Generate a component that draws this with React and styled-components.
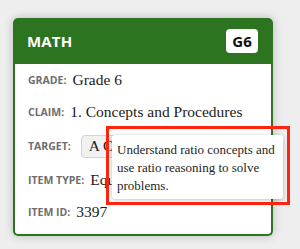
import React from 'react'
import styled, { createGlobalStyle } from 'styled-components'

const Global = createGlobalStyle`
  html, body {
    margin: 0;
    padding: 0;
    background: #eeeeee;
  }
  #root {
    width: 300px;
    height: 249px;
    overflow: hidden;
  }
`

const Stage = styled.div`
  position: relative;
  width: 300px;
  height: 249px;
  padding: 18px 0 0 13px;
  box-sizing: border-box;
`

const Card = styled.div`
  width: 260px;
  border-radius: 5px;
  box-shadow: 0 0 10px rgba(0, 0, 0, 0.22);
  background: #fff;
`

const Head = styled.div`
  height: 46px;
  display: flex;
  align-items: center;
  justify-content: space-between;
  padding: 0 15px 0 14px;
  background: #2c7420;
  border-radius: 5px 5px 0 0;
`

const Subject = styled.span`
  color: #fff;
  font-family: 'Open Sans', sans-serif;
  font-weight: 700;
  font-size: 15px;
  letter-spacing: 0.01em;
`

const Badge = styled.span`
  width: 32px;
  height: 24px;
  display: flex;
  align-items: center;
  justify-content: center;
  background: #fff;
  border-radius: 4px;
  color: #111;
  font-family: 'Open Sans', sans-serif;
  font-weight: 700;
  font-size: 15px;
`

const Body = styled.div`
  border: 2px solid #2c7420;
  border-top: none;
  border-radius: 0 0 5px 5px;
  padding: 0 0 6px 13px;
`

const Row = styled.div`
  height: ${(p) => (p.tall ? 36 : 32)}px;
  display: flex;
  align-items: center;
  gap: 6px;
  white-space: nowrap;
  overflow: hidden;
`

const Label = styled.span`
  font-family: 'Open Sans', sans-serif;
  font-weight: 700;
  font-size: 10.5px;
  color: #6e6e6e;
  text-transform: uppercase;
`

const Value = styled.span`
  font-family: 'Liberation Serif', serif;
  font-size: 15.5px;
  color: #1a1a1a;
`

const Pill = styled.span`
  height: 23px;
  box-sizing: border-box;
  display: flex;
  align-items: center;
  padding: 0 7px;
  margin-left: 4px;
  width: 170px;
  overflow: hidden;
  background: #f1f1f1;
  border: 1px solid #d2d2d2;
  border-radius: 4px;
  font-family: 'Liberation Serif', serif;
  font-size: 15.5px;
  color: #1a1a1a;
`

const Highlight = styled.div`
  position: absolute;
  left: 106px;
  top: 126px;
  width: 184px;
  height: 79px;
  box-sizing: border-box;
  border: 3px solid #ff2410;
`

const Tip = styled.div`
  position: absolute;
  left: 112px;
  top: 135px;
  width: 171px;
  height: 64px;
  box-sizing: border-box;
  padding: 6px 4px 6px 5px;
  background: #fff;
  border-radius: 3px;
  box-shadow: 0 1px 4px rgba(0, 0, 0, 0.25);
  font-family: 'Liberation Serif', serif;
  font-size: 13px;
  line-height: 18px;
  color: #1e1e1e;
`

const rows = [
  { label: 'Grade:', value: 'Grade 6' },
  { label: 'Claim:', value: '1. Concepts and Procedures' },
  { label: 'Target:', pill: 'A Compare' },
  { label: 'Item Type:', value: 'Equation' },
  { label: 'Item ID:', value: '3397' },
]

export default function App() {
  return (
    <>
      <Global />
      <Stage>
        <Card>
          <Head>
            <Subject>MATH</Subject>
            <Badge>G6</Badge>
          </Head>
          <Body>
            {rows.map((r) => (
              <Row key={r.label} tall={r.pill ? 1 : 0}>
                <Label>{r.label}</Label>
                {r.pill ? <Pill>{r.pill}</Pill> : <Value>{r.value}</Value>}
              </Row>
            ))}
          </Body>
        </Card>
        <Highlight />
        <Tip>Understand ratio concepts and use ratio reasoning to solve problems.</Tip>
      </Stage>
    </>
  )
}
